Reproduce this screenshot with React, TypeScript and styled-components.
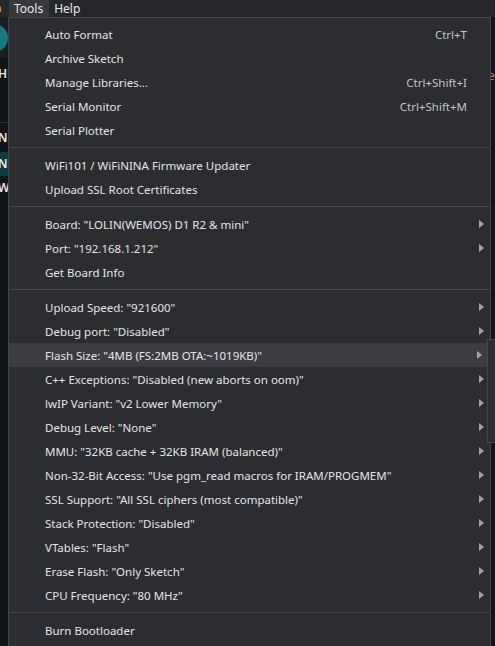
import React from "react";
import styled, { createGlobalStyle } from "styled-components";

const GlobalStyle = createGlobalStyle`
  html, body {
    margin: 0;
    padding: 0;
    background: #111518;
    overflow: hidden;
  }
  * {
    box-sizing: border-box;
  }
`;

const Page = styled.div`
  position: relative;
  width: 495px;
  height: 646px;
  overflow: hidden;
  background: #111518;
  font-family: "Noto Sans", "Open Sans", sans-serif;
  color: #e4e4e4;
`;

const MenuBar = styled.div`
  display: flex;
  align-items: stretch;
  height: 17px;
  background: #26272b;
  font-size: 12px;
`;

const BarGlyph = styled.div`
  width: 9px;
  overflow: hidden;
  color: #e3a23a;
  line-height: 17px;
  font-size: 10px;
  text-indent: -4px;
`;

const BarItem = styled.div<{ $active?: boolean }>`
  padding: 0 6px 0 5px;
  line-height: 17px;
  background: ${(p) => (p.$active ? "#38393d" : "transparent")};
  color: #e8e8e8;
`;

const Body = styled.div`
  display: flex;
  height: 629px;
`;

const Sidebar = styled.div`
  width: 8px;
  overflow: hidden;
  display: flex;
  flex-direction: column;
  background: #111518;
  font-size: 12px;
  font-weight: 600;
  color: #e8e8e8;
`;

const ToolStrip = styled.div`
  height: 41px;
  background: #1d1e21;
  display: flex;
  align-items: center;
`;

const RunButton = styled.div`
  flex: none;
  width: 28px;
  height: 28px;
  margin-left: -20px;
  border-radius: 50%;
  background: #17797b;
`;

const SideLine = styled.div<{ $top?: number; $h?: number; $active?: boolean; $border?: boolean }>`
  height: ${(p) => p.$h ?? 24}px;
  line-height: ${(p) => p.$h ?? 24}px;
  white-space: nowrap;
  text-indent: -2px;
  margin-top: ${(p) => p.$top ?? 0}px;
  background: ${(p) => (p.$active ? "#0d3b3f" : "transparent")};
  border-top: ${(p) => (p.$border ? "1px solid #2a2e33" : "none")};
`;

const Menu = styled.div`
  width: 483px;
  height: 630px;
  background: #2c2d31;
  border: 1px solid #46474b;
  border-bottom: none;
  padding: 4px 0;
  font-size: 11.5px;
`;

const Row = styled.div<{ $active?: boolean }>`
  display: flex;
  align-items: center;
  height: 24px;
  padding: 0 6px 0 36px;
  margin-right: ${(p) => (p.$active ? "2px" : "0")};
  background: ${(p) => (p.$active ? "#3c3d41" : "transparent")};
  white-space: nowrap;
`;

const Label = styled.span`
  flex: 1;
  color: #e4e4e4;
`;

const Shortcut = styled.span`
  color: #c4c4c4;
  margin-right: 12px;
`;

const ArrowSlot = styled.span`
  width: 5px;
  display: flex;
  justify-content: flex-end;
`;

const Arrow = styled.span`
  width: 0;
  height: 0;
  border-left: 5px solid #a2a2a2;
  border-top: 4px solid transparent;
  border-bottom: 4px solid transparent;
`;

const Separator = styled.div`
  height: 1px;
  margin: 5px 1px;
  background: #46474b;
`;

const RightEdge = styled.div`
  flex: 1;
  background: #111518;
  color: #b98a4a;
  font-size: 12px;
  overflow: hidden;
  padding-top: 50px;
  text-indent: -3px;
`;

const Submenu = styled.div`
  position: absolute;
  left: 487px;
  top: 339px;
  width: 120px;
  height: 104px;
  background: #2c2d31;
  border: 1px solid #46474b;
`;

type Item =
  | { sep: true }
  | { label: string; shortcut?: string; sub?: boolean; active?: boolean };

const items: Item[] = [
  { label: "Auto Format", shortcut: "Ctrl+T" },
  { label: "Archive Sketch" },
  { label: "Manage Libraries...", shortcut: "Ctrl+Shift+I" },
  { label: "Serial Monitor", shortcut: "Ctrl+Shift+M" },
  { label: "Serial Plotter" },
  { sep: true },
  { label: "WiFi101 / WiFiNINA Firmware Updater" },
  { label: "Upload SSL Root Certificates" },
  { sep: true },
  { label: 'Board: "LOLIN(WEMOS) D1 R2 & mini"', sub: true },
  { label: 'Port: "192.168.1.212"', sub: true },
  { label: "Get Board Info" },
  { sep: true },
  { label: 'Upload Speed: "921600"', sub: true },
  { label: 'Debug port: "Disabled"', sub: true },
  { label: 'Flash Size: "4MB (FS:2MB OTA:~1019KB)"', sub: true, active: true },
  { label: 'C++ Exceptions: "Disabled (new aborts on oom)"', sub: true },
  { label: 'lwIP Variant: "v2 Lower Memory"', sub: true },
  { label: 'Debug Level: "None"', sub: true },
  { label: 'MMU: "32KB cache + 32KB IRAM (balanced)"', sub: true },
  { label: 'Non-32-Bit Access: "Use pgm_read macros for IRAM/PROGMEM"', sub: true },
  { label: 'SSL Support: "All SSL ciphers (most compatible)"', sub: true },
  { label: 'Stack Protection: "Disabled"', sub: true },
  { label: 'VTables: "Flash"', sub: true },
  { label: 'Erase Flash: "Only Sketch"', sub: true },
  { label: 'CPU Frequency: "80 MHz"', sub: true },
  { sep: true },
  { label: "Burn Bootloader" },
];

export default function App() {
  return (
    <Page>
      <GlobalStyle />
      <MenuBar>
        <BarGlyph>a</BarGlyph>
        <BarItem $active>Tools</BarItem>
        <BarItem>Help</BarItem>
      </MenuBar>
      <Body>
        <Sidebar>
          <ToolStrip>
            <RunButton />
          </ToolStrip>
          <SideLine $top={4}>HE</SideLine>
          <SideLine $top={36} $h={30} $border>NC</SideLine>
          <SideLine $active>NC</SideLine>
          <SideLine>W</SideLine>
        </Sidebar>
        <Menu>
          {items.map((it, i) =>
            "sep" in it ? (
              <Separator key={i} />
            ) : (
              <Row key={i} $active={it.active}>
                <Label>{it.label}</Label>
                {it.shortcut && <Shortcut>{it.shortcut}</Shortcut>}
                <ArrowSlot>{it.sub && <Arrow />}</ArrowSlot>
              </Row>
            )
          )}
        </Menu>
        <RightEdge>e</RightEdge>
      </Body>
      <Submenu />
    </Page>
  );
}
